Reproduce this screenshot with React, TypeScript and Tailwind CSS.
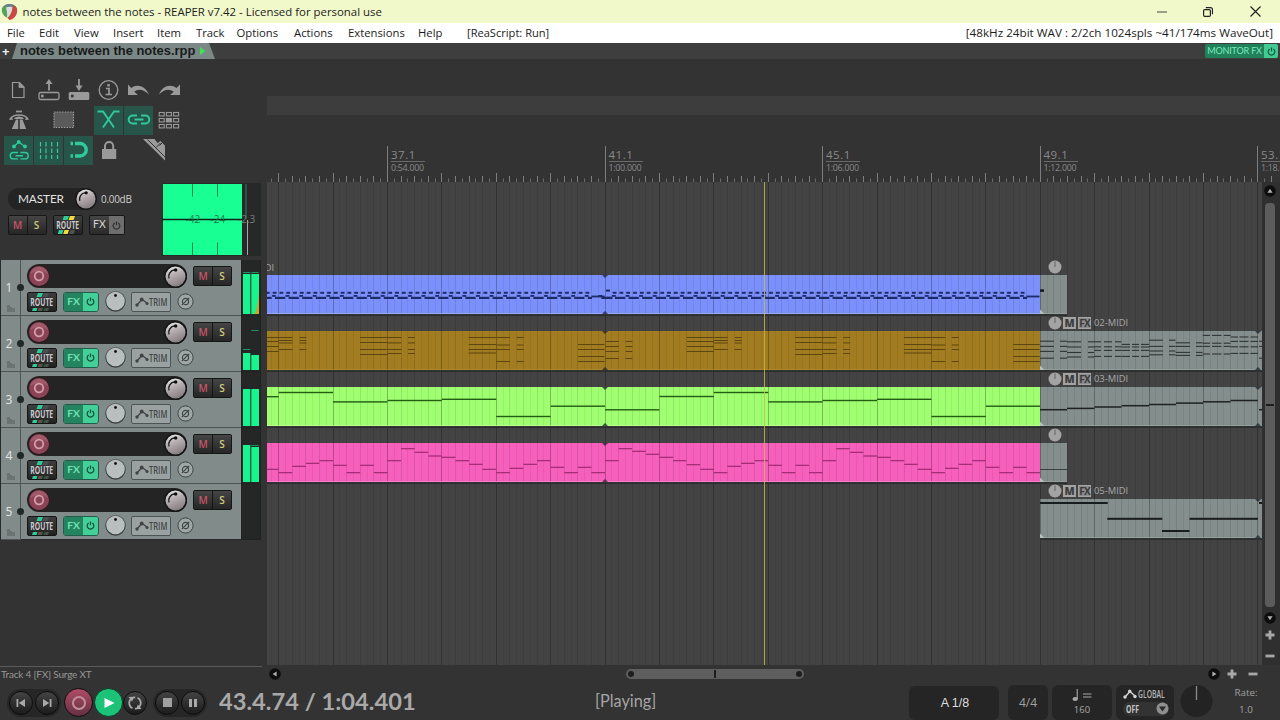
import React from "react";

type Note = [number, number, number];

const BAR = 54.4;
const ORIGIN = 605;
const LEFT = 267;

/* ---------- musical content ---------- */

const bassNotes = (): { x: number; y: number; w: number; h: number }[] => {
  const out: { x: number; y: number; w: number; h: number }[] = [];
  const section = (from: number, to: number) => {
    for (let k = -60; k < 80; k++) {
      const x = 612.7 + k * 6.8;
      if (x + 3.5 > from && x + 4 < to - 14) out.push({ x, y: 291.8, w: 3.8, h: 2 });
    }
    for (let k = -30; k < 40; k++) {
      const x = 612 + k * 13.6;
      if (x + 14 > from && x + 4 < to - 12) {
        out.push({ x, y: 295, w: 3.8, h: 1.8 });
        const start = x + 3;
        out.push({ x: start, y: 296.8, w: Math.min(10.2, to - 13 - start), h: 2.2 });
      }
    }
    out.push({ x: to - 13.5, y: 295.6, w: 13, h: 1.8 });
  };
  section(267, 605);
  section(611, 1040);
  out.push({ x: 606, y: 289.6, w: 4, h: 2 });
  out.push({ x: 606, y: 296.8, w: 6.5, h: 2.2 });
  return out;
};

const chordShapes: [number, number, number[]][] = [
  [251.6, 278.8, [337.5, 341.5, 346.5, 351.5]],
  [279, 292.5, [337.5, 340.5, 343, 349.5]],
  [299.6, 306.4, [337.5, 340.5, 343, 349.5]],
  [360, 387.4, [337.5, 342.5, 349.5, 354.5]],
  [387.6, 401.3, [337.5, 342.9, 349.5, 353.5]],
  [408, 415, [337.5, 342.9, 349.5, 353.5]],
  [468.7, 496.2, [337.5, 344.5, 349.5, 353]],
  [496.4, 510, [337.5, 345, 349.5, 361.5]],
  [516.7, 523.7, [337.5, 345, 349.5, 361.5]],
  [578, 604.5, [344.5, 349.5, 356.5, 361.5]],
];

const chordNotes: Note[] = [
  ...chordShapes.flatMap(([a, b, ys]) => ys.map((y): Note => [a, b, y])),
  ...chordShapes.flatMap(([a, b, ys]) => ys.map((y): Note => [a + 435.2, b + 435.2, y])),
  ...[341.5, 346.5, 351.5, 358.5].flatMap((y): Note[] => [
    [605.5, 619, y],
    [625.6, 632.4, y],
  ]),
];

const padLevels = [396.7, 392.5, 401.9, 400.5, 399.3, 416.5, 406.2, 409.8, 396.5, 392.5, 401.9, 400.5, 399.3, 416.5, 406.2];
const padNotes: Note[] = padLevels.map((y, i) => [ORIGIN + (i - 7) * BAR, ORIGIN + (i - 6) * BAR, y]);

const leadLevels = [
  469.3, 472.7, 466.3, 463.3, 460.7, 465.3, 472.7, 465.3, 472.7, 460.7, 448.7, 452.3, 456, 457.3, 460.7, 464.3, 469.3,
  472.7, 468.3, 464.3, 460.7, 467.3, 472.7, 467.3, 472.7, 460.7, 448.7, 451.3, 454.3, 457.3, 460.7, 464.7, 469.3, 472.7,
  466.3, 463.3, 460.7, 465.3, 472.7, 465.3, 472.7, 460.7, 448.7, 452.3, 456, 457.3, 460.7, 464.3, 469.3, 472.7, 468.3,
  464.3, 460.7, 467.3, 472.7, 467.3, 472.7,
];
const leadNotes: Note[] = leadLevels.map((y, i) => [ORIGIN + (i - 25) * 13.6, ORIGIN + (i - 24) * 13.6, y]);

const tailChordShapes: [number[][], number[]][] = [
  [[[1040, 1054], [1060, 1067]], [341.2, 346.4, 351.4, 358.2]],
  [[[1067, 1081], [1088, 1094]], [341.8, 347, 352.5, 357]],
  [[[1094, 1101], [1104, 1112], [1115, 1121.5]], [341.8, 346.8, 350.4, 356.4]],
  [[[1121.7, 1130], [1132, 1139], [1141, 1149]], [344.4, 347, 350.4, 356.4]],
  [[[1149, 1163], [1169, 1175.5]], [340.2, 346.4, 351, 354.8]],
  [[[1175.7, 1190], [1196, 1202.5]], [342.8, 346.4, 352.4, 355.4]],
  [[[1202.7, 1210], [1212, 1221.5], [1223.7, 1230.5]], [335.4, 343.2, 346.4, 354]],
  [[[1230.7, 1238], [1239.5, 1248.5], [1250.5, 1258]], [337, 341.4, 346.8, 353.4]],
  [[[1259, 1262]], [341.2, 346.4, 358.2]],
];
const tailChords: Note[] = tailChordShapes.flatMap(([spans, ys]) =>
  spans.flatMap(([a, b]) => ys.map((y): Note => [a, b, y])),
);

const tailPad: Note[] = [
  [1040, 1067, 409.7], [1067, 1094.5, 408.4], [1094.5, 1121.5, 407], [1121.5, 1149, 405.7],
  [1149, 1176, 404.5], [1176, 1203, 403.1], [1203, 1230.5, 401.8], [1230.5, 1258, 400.5], [1259, 1262, 409.7],
];

const tailFive: Note[] = [
  [1040, 1107.7, 503], [1107.3, 1162.3, 518.8], [1162, 1189.5, 531], [1189.5, 1258, 518.8], [1259, 1262, 503],
];

/* ---------- timeline primitives ---------- */

function GridLines({ x0, x1, y0, y1, faint, beat, bar }: { x0: number; x1: number; y0: number; y1: number; faint: number; beat: number; bar: number }) {
  const lines: React.ReactNode[] = [];
  for (let k = -50; k < 98; k++) {
    const x = ORIGIN + k * 6.8;
    if (x < x0 || x > x1) continue;
    const isBar = k % 8 === 0;
    const isBeat = k % 2 === 0;
    lines.push(
      <line key={k} x1={Math.floor(x) + 0.5} x2={Math.floor(x) + 0.5} y1={y0} y2={y1} stroke="#000" strokeOpacity={isBar ? bar : isBeat ? beat : faint} />,
    );
  }
  return <g>{lines}</g>;
}

function Clip({ x, w, y, fill, edge, ink, notes, thick = 1.2, seams = [], corner, children }: {
  x: number; w: number; y: number; fill: string; edge: string; ink: string; notes?: Note[]; thick?: number; seams?: number[]; corner?: boolean; children?: React.ReactNode;
}) {
  return (
    <svg width={w} height={41} viewBox={`${x} ${y} ${w} 41`} className="block shrink-0">
      <rect x={x} y={y} width={w} height={39} fill={fill} />
      <GridLines x0={x} x1={x + w} y0={y} y1={y + 39} faint={0.06} beat={0.1} bar={0.26} />
      <rect x={x} y={y + 38.3} width={w} height={0.9} fill={edge} />
      <rect x={x} y={y + 39.2} width={w} height={1.8} fill="#2c2e2e" />
      {notes?.map(([a, b, ny], i) => (
        <rect key={i} x={a} y={ny - thick / 2} width={b - a} height={thick} fill={ink} />
      ))}
      {children}
      {seams.map((s) => (
        <g key={s} fill="#1f2330" fillOpacity={0.75}>
          <path d={`M${s - 3} ${y} h6 l-3 3z`} />
          <path d={`M${s - 3} ${y + 39} h6 l-3 -3z`} />
        </g>
      ))}
      {corner && <path d={`M${x} ${y + 34.5} l4.5 4.5 h-4.5z`} fill="#b9bcbc" />}
    </svg>
  );
}

function ClipHeader({ label }: { label?: string }) {
  return (
    <div className="flex h-[15px] items-center pb-[1px] pl-[781px]">
      <svg width="14" height="14" viewBox="0 0 14 14" className="shrink-0">
        <circle cx="7" cy="7" r="6.5" fill="#a3a3a3" />
        <path d="M7 1.5V7" stroke="#6d6d6d" strokeWidth="1.2" />
      </svg>
      {label && (
        <>
          <span className="ml-[1px] flex h-3 w-[13px] items-center justify-center bg-[#a3a3a3] text-[10.5px] leading-none font-extrabold text-[#3d3d3d]">M</span>
          <span className="ml-[2px] flex h-3 w-[13px] items-center justify-center border border-[#a3a3a3] bg-[#8c8c8c] text-[10px] leading-none font-bold tracking-[-0.8px] text-[#3a3a3a]">FX</span>
          <span className="ml-[3px] text-[9.4px] leading-none whitespace-nowrap text-[#a8a8a8]">{label}</span>
        </>
      )}
    </div>
  );
}

function Ruler() {
  const ticks: React.ReactNode[] = [];
  for (let k = -49; k < 99; k++) {
    const x = ORIGIN + k * 6.8;
    if (x < LEFT || x > 1279) continue;
    const h = k % 32 === 0 ? 36 : k % 8 === 0 ? 9 : k % 2 === 0 ? 6 : 3.5;
    ticks.push(<line key={k} x1={Math.floor(x) + 0.5} x2={Math.floor(x) + 0.5} y1={182 - h} y2={182} stroke="#7d7d7d" strokeOpacity={k % 2 ? 0.75 : 1} />);
  }
  return (
    <svg width="1013" height="67" viewBox="267 115 1013 67" className="absolute inset-0">
      {ticks}
    </svg>
  );
}

const marks = [
  { bar: "37.1", time: "0:54.000" },
  { bar: "41.1", time: "1:00.000" },
  { bar: "45.1", time: "1:06.000" },
  { bar: "49.1", time: "1:12.000" },
  { bar: "53.1", time: "1:18.000" },
];

/* ---------- toolbar ---------- */

function Tool({ active, wide, children }: { active?: boolean; wide?: boolean; children: React.ReactNode }) {
  return (
    <div className={`flex h-[30px] items-center justify-center ${wide ? "w-[60px]" : "w-[30px]"} ${active ? "text-[#2fc99b]" : "text-[#9a9a9a]"}`}>
      <div className={`flex size-[29px] items-center justify-center ${active ? "bg-[#28554a]" : ""}`}>
        <svg width="30" height="30" viewBox="0 0 30 30" fill="none" stroke="currentColor" strokeWidth="1.4" className="shrink-0">
          {children}
        </svg>
      </div>
    </div>
  );
}

function Toolbar() {
  return (
    <div className="flex flex-col pt-[16px] pl-[3.5px]">
      <div className="flex">
        <Tool>
          <path d="M8.5 7.5h7l4.5 4.5v10.5h-11.5z" strokeWidth="1.2" />
          <path d="M15 7.5v5h5z" fill="currentColor" strokeWidth="0.8" />
        </Tool>
        <Tool>
          <rect x="5" y="17.5" width="20" height="7" rx="1.5" strokeWidth="1.3" />
          <rect x="7" y="19.7" width="2.6" height="2.6" fill="currentColor" stroke="none" />
          <path d="M15 15.5V7" strokeWidth="1.8" />
          <path d="M11.5 9L15 4l3.5 5z" fill="currentColor" stroke="none" />
        </Tool>
        <Tool>
          <rect x="4.7" y="17" width="20.6" height="8" rx="1.5" fill="currentColor" stroke="none" />
          <rect x="7" y="19.7" width="2.6" height="2.6" fill="#333" stroke="none" />
          <path d="M15 4v8" strokeWidth="1.8" />
          <path d="M11.5 10.5L15 16l3.5-5.5z" fill="currentColor" stroke="none" />
        </Tool>
        <Tool>
          <circle cx="14.5" cy="15" r="9.3" strokeWidth="1.3" />
          <path d="M12 13.5h3v6M11.5 19.5h6.5" strokeWidth="1.7" />
          <rect x="13.3" y="9" width="2.5" height="2.5" fill="currentColor" stroke="none" />
        </Tool>
        <Tool>
          <path d="M4 9.5V20h10l-3.8-3.2C14 13.5 19.5 14 25 19.5C21.5 11 13 8.5 7.300 13z" fill="currentColor" stroke="none" />
        </Tool>
        <Tool>
          <path d="M26 9.5V20H16l3.800-3.200C15.500 13.500 10 14 5 19.500C8 11 16.500 8.500 22.500 13z" fill="currentColor" stroke="none" />
        </Tool>
      </div>
      <div className="flex">
        <Tool>
          <path d="M12 14.500h2.200V24H7.800z M18.500 14.500h-2.700V24H22.200z" fill="currentColor" stroke="none" />
          <path d="M10 14c1-3.500 9-3.500 10 0z" fill="currentColor" stroke="none" />
          <path d="M6 14.500C9 8.500 21 8.500 24 14.500" strokeWidth="1.500" />
          <path d="M5 14.500l4 .5-1.500-3.500zM25 14.500l-4 .5 1.500-3.500z" fill="currentColor" stroke="none" />
          <path d="M12 6.500h6" strokeWidth="1.800" />
        </Tool>
        <Tool wide>
          <rect x="5" y="7" width="19.500" height="15.500" fill="#5b5b5b" strokeWidth="1.200" strokeDasharray="1.500 1.200" />
        </Tool>
        <Tool active>
          <path d="M3.500 6.500H9l11 16M25.500 6.500H20L9 22.500" strokeWidth="1.900" />
        </Tool>
        <Tool active>
          <path d="M13 18.500H8.700a4 4 0 0 1 0-8H13M17 10.500h4.300a4 4 0 0 1 0 8H17M10.500 14.500h9" strokeWidth="2" />
        </Tool>
        <Tool>
          {[0, 1, 2].map((r) =>
            [0, 1, 2].map((c) => (
              <rect key={`${r}${c}`} x={5.2 + c * 7.2} y={7.5 + r * 6} width="5" height="3.4" strokeWidth="1.1" fill={r === 1 && c === 1 ? "currentColor" : "none"} />
            )),
          )}
        </Tool>
      </div>
      <div className="flex">
        <Tool active>
          <path d="M10.500 11l4.500-4 3 2.500 3.500 2.500" strokeWidth="1.300" />
          <g fill="currentColor" stroke="none">
            <circle cx="10" cy="11.500" r="1.900" />
            <circle cx="14.700" cy="7" r="1.900" />
            <circle cx="21" cy="11.500" r="1.900" />
          </g>
          <path d="M14 17.500H9.500a3.200 3.200 0 0 0 0 6.400H14M16.500 17.500H21a3.200 3.200 0 0 1 0 6.400h-4.500M11.500 20.700h7.500" strokeWidth="1.400" />
        </Tool>
        <Tool active>
          <path d="M6.500 7v17M12 7v17M17.700 7v17M23.500 7v17" strokeWidth="1.200" strokeDasharray="4.500 2" />
        </Tool>
        <Tool active>
          <path d="M11 8.500h5a6.200 6.200 0 0 1 0 12.500h-5" strokeWidth="3.400" />
          <path d="M6.500 8.500h2.500M6.500 21h2.500" strokeWidth="3.400" />
        </Tool>
        <Tool>
          <rect x="8" y="14" width="14.200" height="10" fill="currentColor" stroke="none" />
          <path d="M11 14.500v-3.500a4.100 4.100 0 0 1 8.200 0v3.500" strokeWidth="2" />
        </Tool>
        <Tool wide>
          <path d="M4 4h11.500l3 4 3-2 4.500 4.500V25.500z" fill="currentColor" stroke="none" />
          <path d="M8.500 4.500L26 22M17 12.500l4.500-4.500M20.500 10.500l3-3" stroke="#333" strokeWidth="1" />
        </Tool>
      </div>
    </div>
  );
}

/* ---------- track controls ---------- */

function Power({ size = 9 }: { size?: number }) {
  return (
    <svg width={size} height={size} viewBox="0 0 10 10" fill="none" stroke="currentColor" strokeWidth="1.3">
      <path d="M3 2.2a3.7 3.7 0 1 0 4 0M5 .6v4" />
    </svg>
  );
}

function MuteSolo() {
  return (
    <div className="flex h-[20px] w-[39px] rounded-[2px] border border-[#161616] bg-[#161616] text-[10px] font-semibold">
      <div className="flex flex-1 items-center justify-center bg-linear-to-b from-[#454545] to-[#262626] text-[#c75567]">M</div>
      <div className="ml-px flex flex-1 items-center justify-center bg-linear-to-b from-[#454545] to-[#262626] text-[#cfcf7c]">S</div>
    </div>
  );
}

function Route({ master }: { master?: boolean }) {
  return (
    <div className="relative flex h-[20px] w-[30px] items-center justify-center rounded-[2px] border border-[#151515] bg-linear-to-b from-[#3d3f3f] to-[#222]">
      <svg width="28" height="18" viewBox="0 0 28 18" className="absolute inset-0">
        {master ? (
          <>
            <path d="M10 0h5l-1.5 4h-5z" fill="#2fc99b" />
            <path d="M16 0h5l-1.5 4h-5z" fill="#f3dc3c" />
            <path d="M5 14h4.5l-1.3 4H3.7z" fill="#2fc99b" />
            <path d="M10.5 14H15l-1.3 4H9.2z" fill="#f3dc3c" />
            <path d="M16.5 14H21l-1.3 4h-4.5z" fill="#4e5452" />
          </>
        ) : (
          <>
            <path d="M10 0h5l-1.5 4h-5z" fill="#2fc99b" />
            <path d="M16 0h5l-1.5 4h-5z" fill="#4a504e" />
            <path d="M5 15h4.5l-1 3H4z" fill="#2fc99b" />
            <path d="M10.5 15H15l-1 3H9.5z" fill="#5c5140" />
            <path d="M16.5 15H21l-1 3h-4.5z" fill="#3e5249" />
          </>
        )}
      </svg>
      <span className="relative scale-x-[0.68] font-['Open_Sans'] text-[10px] leading-none font-bold text-[#c9c9c9]">ROUTE</span>
    </div>
  );
}

function VolumeKnob({ size }: { size: number }) {
  return (
    <svg width={size} height={size} viewBox="0 0 24 24" className="shrink-0">
      <defs>
        <linearGradient id="knob" x1="0" y1="0" x2="0.4" y2="1">
          <stop offset="0" stopColor="#f4f4f4" />
          <stop offset="0.5" stopColor="#b5adaf" />
          <stop offset="1" stopColor="#8b8386" />
        </linearGradient>
      </defs>
      <circle cx="12" cy="12" r="12" fill="#161616" />
      <circle cx="12" cy="12" r="10.4" fill="url(#knob)" />
      <path d="M5.200 14C4 10 6.500 5.500 11.500 5" fill="none" stroke="#1b1b1b" strokeWidth="1.500" />
      <circle cx="12.200" cy="5.300" r="1.800" fill="#111" />
    </svg>
  );
}

function Track({ index, last }: { index: number; last?: boolean }) {
  return (
    <div className="flex h-[56px] w-[241px] border-l border-[#2a2a2a] bg-[#818b89]">
      <div className="flex h-[56px] w-5 flex-col items-center border-r border-b border-[#4f5655] pt-[18px]">
        <span className="pr-[3px] text-[12px] leading-[19px] text-[#e6e6e6]">{index}</span>
        <svg width="10" height="8" viewBox="0 0 10 8" className="mt-[7px]">
          <path d="M1 1h3v2h2v1h3v4H1z" fill="#6a7371" />
        </svg>
      </div>
      <div className={`relative flex flex-1 flex-col border-b pt-[4px] pl-[6px] ${last ? "border-[#2a2a2a]" : "border-[#4f5655]"}`}>
        <div className="absolute top-[24px] left-[-4px] size-[7px] rounded-full bg-[#222626]" />
        <div className="flex h-[24px] items-center">
          <div className="flex h-[24px] w-[160px] items-center justify-between rounded-l-full rounded-r-full bg-[#242424]">
            <svg width="22" height="22" viewBox="0 0 22 22" className="ml-px">
              <circle cx="11" cy="11" r="10.8" fill="#2c1a1f" />
              <circle cx="11" cy="11" r="10" fill="#8a4455" />
              <path d="M2 9a9.200 9.200 0 0 1 18 0a12 8 0 0 0-18 0" fill="#a05a6a" />
              <circle cx="11" cy="11" r="4.300" fill="none" stroke="#d5a0ab" strokeWidth="1.700" />
            </svg>
            <VolumeKnob size={23} />
          </div>
          <div className="ml-[6px]">
            <MuteSolo />
          </div>
        </div>
        <div className="mt-[3.400px] flex h-[21px] items-center">
          <Route />
          <div className="ml-[6px] flex h-[20px] w-[36px] overflow-hidden rounded-[3px] border border-[#1f5e48] text-[#0f4a35]">
            <div className="flex w-[19px] items-center justify-center bg-[#258460] font-['Lato'] text-[10.300px] font-bold text-[#6fe3b4]">FX</div>
            <div className="flex flex-1 items-center justify-center bg-[#43cf97]">
              <Power />
            </div>
          </div>
          <svg width="21" height="21" viewBox="0 0 21 21" className="ml-[6px]">
            <circle cx="10.500" cy="10.500" r="10.200" fill="#3b4040" />
            <circle cx="10.500" cy="10" r="9.300" fill="#b9bfbe" />
            <circle cx="10.500" cy="4.500" r="1.400" fill="#111" />
          </svg>
          <div className="ml-[5px] flex h-[20px] w-[40px] items-center rounded-[2px] border border-[#4d5453] bg-[#9aa2a1] pl-[3px] text-[#414746]">
            <svg width="14" height="10" viewBox="0 0 14 10" className="shrink-0">
              <path d="M2 8l5-5.500L12 6" fill="none" stroke="currentColor" strokeWidth="1.400" />
              <circle cx="2" cy="8" r="1.700" fill="currentColor" />
              <circle cx="6.700" cy="2.500" r="1.900" fill="currentColor" />
              <circle cx="12" cy="6.500" r="1.600" fill="currentColor" />
            </svg>
            <span className="origin-left scale-x-[0.72] text-[10.500px] leading-none font-semibold">TRIM</span>
          </div>
          <svg width="17" height="17" viewBox="0 0 17 17" className="ml-[5.500px]" fill="none" stroke="#3e4443">
            <circle cx="8.500" cy="8.500" r="7.600" fill="#a0a8a7" />
            <circle cx="8.500" cy="8.500" r="3.100" strokeWidth="1.100" />
            <path d="M4.800 12.200l7.400-7.400" strokeWidth="1.100" />
          </svg>
        </div>
      </div>
    </div>
  );
}

type MeterSpec = { l: number; r: number; peakL?: number; peakR?: number; warm?: boolean };
const meters: MeterSpec[] = [
  { l: 40, r: 40, peakL: 43, peakR: 43, warm: true },
  { l: 17, r: 15, peakL: 22, peakR: 41 },
  { l: 37, r: 37 },
  { l: 37, r: 35, peakR: 38 },
  { l: 0, r: 0 },
];

function Meter({ l, r, peakL, peakR, warm }: MeterSpec) {
  return (
    <svg width="20" height="56" viewBox="0 0 20 56" className="block bg-[#1f2020]">
      <rect x="0.500" width="19" height="55.500" fill="#252626" />
      <rect x="2" y={54 - l} width="7.300" height={l} fill="#17f58f" />
      <rect x="10.300" y={54 - r} width="7.700" height={r} fill="#17f58f" />
      {warm && <path d="M18 32v22h-4.500c1.500-3 3-8 4.500-22z" fill="#c9a52c" />}
      {peakL && <rect x="2" y={55 - peakL} width="7.300" height="0.900" fill="#22a06a" />}
      {peakR && <rect x="10.300" y={55 - peakR} width="7.300" height="0.900" fill="#22a06a" />}
    </svg>
  );
}

function Master() {
  return (
    <div className="flex h-[77px] pl-[7.500px]">
      <div className="flex w-[154.500px] flex-col pt-[4px]">
        <div className="flex h-[24px] items-center">
          <div className="flex h-[22px] w-[79px] items-center rounded-l-full bg-[#242424] pl-[10.500px]">
            <span className="font-['Lato'] text-[11.800px] tracking-[-0.100px] text-[#e2e2e2]">MASTER</span>
          </div>
          <div className="-ml-[12px]">
            <VolumeKnob size={22} />
          </div>
          <span className="ml-[4.500px] text-[10px] tracking-[-0.300px] whitespace-nowrap text-[#cfcfcf]">0.00dB</span>
        </div>
        <div className="mt-[4px] flex items-center">
          <MuteSolo />
          <div className="ml-[6.500px]">
            <Route master />
          </div>
          <div className="ml-[6px] flex h-[20px] w-[36px] overflow-hidden rounded-[2px] border border-[#151515]">
            <div className="flex w-[19px] items-center justify-center bg-linear-to-b from-[#454545] to-[#2a2a2a] font-['Lato'] text-[10.500px] text-[#d5d5d5]">FX</div>
            <div className="flex flex-1 items-center justify-center bg-[#6e6e6e] text-[#2d2d2d]">
              <Power />
            </div>
          </div>
        </div>
      </div>
      <svg width="100" height="77" viewBox="162 183 100 77" className="block">
        <rect x="162" y="183" width="99" height="73" fill="#272828" />
        <rect x="163" y="184" width="79" height="71" fill="#18ff94" />
        <path d="M192.500 184v12.500M217.500 184v12.500M192.500 242.500V255M217.500 242.500V255" stroke="#0b8a50" />
        <path d="M162 219.500h84" stroke="#10241b" strokeWidth="1.600" />
        <path d="M246 184v35" stroke="#3f7d62" />
        <path d="M247.500 220v35" stroke="#a5a5a5" />
        <g fontFamily="Open Sans" fontSize="10" fill="#14794c">
          <text x="185.500" y="223">-42</text>
          <text x="210.500" y="223">-24</text>
          <text x="238" y="223" fill="#6f8078">-2.3</text>
        </g>
      </svg>
    </div>
  );
}

/* ---------- scroll bars ---------- */

function Arrow({ dir }: { dir: "up" | "down" | "left" | "right" }) {
  const d = { up: "M6 3.8l2.6 4H3.4z", down: "M6 8.2l2.6-4H3.4z", left: "M3.6 6l4-2.5v5z", right: "M8.4 6l-4-2.5v5z" }[dir];
  return (
    <svg width="12" height="12" viewBox="0 0 12 12" className="shrink-0">
      <circle cx="6" cy="6" r="5.8" fill="#0d0d0d" />
      <path d={d} fill="#b0b0b0" />
    </svg>
  );
}

function Sign({ plus }: { plus?: boolean }) {
  return (
    <svg width="10" height="10" viewBox="0 0 10 10" className="block shrink-0">
      <path d={plus ? "M.5 5h9M5 .5v9" : "M.5 5h9"} stroke="#a8a8a8" strokeWidth="2.8" />
    </svg>
  );
}

/* ---------- transport ---------- */

function RoundButton({ children }: { children: React.ReactNode }) {
  return (
    <div className="flex size-[24px] items-center justify-center rounded-full border border-[#0c0c0c] bg-linear-to-b from-[#444] to-[#1c1c1c] text-[#a9a9a9]">
      {children}
    </div>
  );
}

function Transport() {
  return (
    <div className="flex h-[38px] items-center pb-[1px] pl-[7px] font-['Lato']">
      <div className="mt-[4px] flex h-[28px] w-[54px] items-center justify-between rounded-full bg-[#262626] px-[2px]">
        <RoundButton>
          <svg width="10" height="10" viewBox="0 0 10 10" fill="currentColor"><path d="M.5 1h1.800v8H.5zM9 1v8L2.800 5z" /></svg>
        </RoundButton>
        <RoundButton>
          <svg width="10" height="10" viewBox="0 0 10 10" fill="currentColor"><path d="M7.700 1h1.800v8H7.700zM1 1v8l6.200-4z" /></svg>
        </RoundButton>
      </div>
      <div className="mt-[4px] ml-[3px] flex size-[29px] items-center justify-center rounded-full border border-[#150c0e] bg-linear-to-b from-[#b04c67] to-[#643040]">
        <div className="size-[14px] rounded-full border-[2px] border-[#c0909b]" />
      </div>
      <div className="mt-[4px] ml-[1px] flex size-[29px] items-center justify-center rounded-full border border-[#0e3b27] bg-[#1cc277]">
        <svg width="12" height="12" viewBox="0 0 12 12"><path d="M1.500 1l10 5-10 5z" fill="#fff" /></svg>
      </div>
      <div className="mt-[4px] flex">
        <RoundButton>
          <svg width="16" height="16" viewBox="0 0 16 16" fill="none" stroke="currentColor" strokeWidth="1.700">
            <path d="M5.500 13.200A5.700 5.700 0 0 1 4.600 3.400M10.500 2.800a5.700 5.700 0 0 1 .9 9.800" />
            <path d="M5.200 3a5.700 5.700 0 0 1 3-.7M10.800 13a5.700 5.700 0 0 1-3 .7" />
            <path d="M1.500 2l5.200-.2-1.500 4.700zM14.500 14l-5.200.2 1.500-4.700z" fill="currentColor" stroke="none" />
          </svg>
        </RoundButton>
      </div>
      <div className="mt-[4px] ml-[6px] flex h-[28px] w-[54px] items-center justify-between rounded-full bg-[#262626] px-[2px]">
        <RoundButton><div className="size-[9px] bg-[#a0a0a0]" /></RoundButton>
        <RoundButton>
          <div className="flex gap-[2px]">
            <div className="h-[8px] w-[3px] bg-[#a9a9a9]" />
            <div className="h-[8px] w-[3px] bg-[#a9a9a9]" />
          </div>
        </RoundButton>
      </div>
      <div className="ml-[12px] w-[376px] pt-[3px] text-[23.700px] leading-none font-bold whitespace-nowrap text-[#a9a9a9]">43.4.74 / 1:04.401</div>
      <div className="w-[314px] pt-[2px] text-[16.300px] leading-none text-[#a5a5a5]">[Playing]</div>
      <div className="mt-[4px] flex h-[34px] w-[90px] items-center justify-center rounded-[6px] bg-[#252525] pt-px pl-[2px] font-['Liberation_Sans'] text-[12.500px] text-[#dedede]">A 1/8</div>
      <div className="mt-[3px] ml-[9px] flex h-[35px] w-[40px] items-center justify-center rounded-[6px] bg-[#252525] pt-[2px] font-['Open_Sans'] text-[12px] text-[#a3a3a3]">4/4</div>
      <div className="mt-[3px] ml-[4px] flex h-[35px] w-[60px] flex-col items-center rounded-[6px] bg-[#252525] pt-[4px] text-[#a8a8a8]">
        <svg width="20" height="12" viewBox="0 0 20 12">
          <path d="M5.200 0v10" stroke="currentColor" strokeWidth="1.100" />
          <ellipse cx="3.200" cy="10" rx="2.700" ry="1.900" fill="currentColor" />
          <path d="M11 5h8.500M11 8h8.500" stroke="currentColor" strokeWidth="1.100" />
        </svg>
        <span className="mt-[4px] font-['Open_Sans'] text-[9.500px] leading-none">160</span>
      </div>
      <div className="mt-[3px] ml-[4px] flex h-[35px] w-[58px] flex-col rounded-[6px] bg-[#252525] pt-[4px] pr-[5px] pl-[7px]">
        <div className="flex h-[11px] items-center">
          <svg width="14" height="10" viewBox="0 0 14 10" className="shrink-0">
            <path d="M2 8l5-5.500L12 7" fill="none" stroke="#d5d5d5" strokeWidth="1.400" />
            <circle cx="2" cy="8" r="1.700" fill="#d5d5d5" />
            <circle cx="6.700" cy="2.300" r="1.700" fill="#d5d5d5" />
            <circle cx="12" cy="7.500" r="1.700" fill="#d5d5d5" />
          </svg>
          <span className="ml-px origin-left scale-x-[0.68] font-['Open_Sans'] text-[10px] leading-none font-semibold text-[#b5b5b5]">GLOBAL</span>
        </div>
        <div className="mt-[2px] flex h-[14px] items-center justify-between rounded-full bg-[#333] pl-[3px]">
          <span className="origin-left scale-x-[0.68] font-['Open_Sans'] text-[10px] leading-none font-bold text-[#c5c5c5]">OFF</span>
          <svg width="13" height="13" viewBox="0 0 13 13"><circle cx="6.500" cy="6.500" r="6" fill="#8f8f8f" /><path d="M3 4.500h7l-3.500 5z" fill="#2a2a2a" /></svg>
        </div>
      </div>
      <svg width="33" height="33" viewBox="0 0 33 33" className="ml-[6px]">
        <circle cx="16.500" cy="17" r="16" fill="#232323" />
        <path d="M16.500 2v14" stroke="#8c8c8c" strokeWidth="1.300" />
      </svg>
      <div className="ml-[15px] flex w-[36px] flex-col items-center pt-[2px] font-['Open_Sans'] text-[9.800px] leading-[16.500px] text-[#a0a0a0]">
        <span>Rate:</span>
        <span>1.0</span>
      </div>
    </div>
  );
}

/* ---------- page ---------- */

export default function App() {
  return (
    <div className="flex h-[720px] w-[1280px] flex-col overflow-hidden bg-[#333333] font-['Open_Sans','Noto_Sans',sans-serif]">
      <header className="flex h-[23px] shrink-0 items-center bg-[#f1f9cb] text-[#1d1d1d]">
        <svg width="17" height="18" viewBox="0 0 17 18" className="ml-px">
          <path d="M1 6C1.500 3 4.500 1 8.500 1S15.500 3 16 6l-7.500 3z" fill="#66808a" />
          <path d="M1 5.500C.2 9 2 12.500 5.500 14.500L8.500 8 5 3C3 3.500 1.500 4.300 1 5.500z" fill="#4fa65a" />
          <path d="M12 2.200c3.500 1 5 4.300 3.800 8C14.800 13.500 12 16.500 8.500 17L6 14.500C9 12 11 8 12 2.200z" fill="#c64b43" />
          <path d="M5 4.500c2-.8 4.500-.8 6.500-.2-.5 4.700-2.500 8.700-5 10.700C6.300 11.500 6 8 5 4.500z" fill="#e3dcdc" />
        </svg>
        <span className="ml-[4.500px] flex-1 pb-px text-[11.420px] leading-[17px] whitespace-nowrap">notes between the notes - REAPER v7.42 - Licensed for personal use</span>
        <div className="flex w-[126px] items-center">
          <svg width="10" height="10" viewBox="0 0 10 10" className="ml-[3px]"><path d="M0 5h10" stroke="#444" /></svg>
          <svg width="10" height="10" viewBox="0 0 10 10" fill="none" stroke="#222" strokeWidth="1.2" className="ml-[36px]">
            <rect x=".6" y="2.6" width="6.8" height="6.8" rx="1.2" />
            <path d="M2.800 .6h4.700a2 2 0 0 1 2 2v4.600" />
          </svg>
          <svg width="11" height="11" viewBox="0 0 11 11" className="ml-[37px]"><path d="M.5.5l10 10M10.500.5l-10 10" stroke="#222" strokeWidth="1.2" /></svg>
        </div>
      </header>

      <nav className="flex h-[20px] shrink-0 items-center bg-white pl-[7px] text-[11.300px] whitespace-nowrap text-[#1c1c1c]">
        <span className="w-[32px]">File</span>
        <span className="w-[35px]">Edit</span>
        <span className="w-[39px]">View</span>
        <span className="w-[44px]">Insert</span>
        <span className="w-[39px]">Item</span>
        <span className="w-[40.500px]">Track</span>
        <span className="w-[57.500px]">Options</span>
        <span className="w-[54px]">Actions</span>
        <span className="w-[70px]">Extensions</span>
        <span className="w-[49px]">Help</span>
        <span className="flex-1 text-[11.100px]">[ReaScript: Run]</span>
        <span className="pr-[7px] text-[11.680px]">[48kHz 24bit WAV : 2/2ch 1024spls ~41/174ms WaveOut]</span>
      </nav>

      <div className="flex h-[16px] shrink-0 items-center bg-[#3e3e3e]">
        <span className="w-[12px] pl-[2px] text-[13px] leading-none font-bold text-[#eee]">+</span>
        <div className="flex h-full w-[203px] items-center bg-[#7c8886] pl-[8px] font-['Liberation_Sans'] text-[12.950px] font-bold whitespace-nowrap text-[#171b1b] [clip-path:polygon(5px_0,197px_0,100%_100%,0_100%)]">
          notes between the notes.rpp
          <svg width="6" height="8" viewBox="0 0 6 8" className="ml-[5px]"><path d="M0 0l5.500 4L0 8z" fill="#36e84e" /></svg>
        </div>
        <div className="ml-auto flex h-[14px] w-[73px] overflow-hidden rounded-[2px] bg-[#21815b] font-['Lato'] text-[9.100px] text-[#7ce9bd]">
          <span className="flex w-[59px] shrink-0 items-center justify-center tracking-[-0.200px] whitespace-nowrap">MONITOR FX</span>
          <span className="flex flex-1 items-center justify-center bg-[#41cb93] text-[#12583d]"><Power size={9} /></span>
        </div>
        <div className="w-[2px]" />
      </div>

      <div className="flex h-[623px] shrink-0">
        <aside className="flex w-[262px] flex-col">
          <Toolbar />
          <div className="h-[18px] shrink-0" />
          <Master />
          <div className="flex">
            <div className="flex flex-col">
              {[1, 2, 3, 4, 5].map((n) => (
                <Track key={n} index={n} last={n === 5} />
              ))}
            </div>
            <div className="flex flex-col">
              {meters.map((m, i) => (
                <Meter key={i} {...m} />
              ))}
            </div>
          </div>
          <div className="flex-1" />
          <div className="h-[16px] border-t border-[#5a5a5a] pt-[2px] pl-[1px] font-['Lato'] text-[10px] leading-none tracking-[-0.200px] text-[#969696]">Track 4 [FX] Surge XT</div>
        </aside>
        <div className="w-[5px]" />

        <main className="flex w-[1013px] flex-col">
          <div className="h-[37px]" />
          <div className="h-[19px] bg-[#3d3d3d]" />
          <div className="relative h-[67px] overflow-hidden">
            <Ruler />
            <div className="flex pt-[33.500px] pl-[124px] text-[#8a8a8a]">
              {marks.map((m) => (
                <div key={m.bar} className="w-[217.500px] shrink-0">
                  <div className="flex w-[34px] flex-col whitespace-nowrap">
                    <span className="border-b border-[#6a6a6a] text-[11.500px] leading-[12px] tracking-[0.500px]">{m.bar}</span>
                    <span className="pt-[1px] text-[8.900px] leading-[10px] tracking-[-0.300px]">{m.time}</span>
                  </div>
                </div>
              ))}
            </div>
          </div>

          <div className="flex h-[483px]">
            <div className="relative h-[483px] w-[995px] overflow-hidden bg-[#434343]">
              <svg width="995" height="483" viewBox="267 182 995 483" className="absolute inset-0">
                <GridLines x0={267} x1={1262} y0={182} y1={665} faint={0.06} beat={0.1} bar={0.26} />
              </svg>
              <div className="relative flex flex-col pt-[78px]">
                <div className="relative h-[56px]">
                  <span className="absolute top-[3px] left-[-2px] text-[9px] leading-none text-[#a8a8a8]">DI</span>
                  <ClipHeader />
                  <div className="flex">
                    <Clip x={267} w={773} y={275} fill="#7b90fb" edge="#a3b1ff" ink="#1e2d6b" seams={[605]}>
                      {bassNotes().map((n, i) => (
                        <rect key={i} x={n.x} y={n.y} width={n.w} height={n.h} fill="#1d2b69" />
                      ))}
                    </Clip>
                    <Clip x={1040} w={27} y={275} fill="#848e8c" edge="#9aa2a1" ink="#121516" thick={2.4} notes={[[1040, 1044, 290.6]]} corner />
                  </div>
                </div>
                <div className="h-[56px]">
                  <ClipHeader label="02-MIDI" />
                  <div className="flex">
                    <Clip x={267} w={773} y={331} fill="#a17c20" edge="#b28e35" ink="#5c450f" thick={1} notes={chordNotes} seams={[605]} />
                    <Clip x={1040} w={222} y={331} fill="#848e8c" edge="#9aa2a1" ink="#2f3535" thick={1.1} notes={tailChords} seams={[1258]} corner />
                  </div>
                </div>
                <div className="h-[56px]">
                  <ClipHeader label="03-MIDI" />
                  <div className="flex">
                    <Clip x={267} w={773} y={387} fill="#a0ff70" edge="#c0ff9c" ink="#235c14" thick={1.4} notes={padNotes} seams={[605]} />
                    <Clip x={1040} w={222} y={387} fill="#848e8c" edge="#9aa2a1" ink="#1d2121" thick={1.5} notes={tailPad} seams={[1258]} corner />
                  </div>
                </div>
                <div className="h-[56px]">
                  <ClipHeader />
                  <div className="flex">
                    <Clip x={267} w={773} y={443} fill="#f75fbc" edge="#ff8bd0" ink="#98266b" thick={1.1} notes={leadNotes} seams={[605]} />
                    <Clip x={1040} w={27} y={443} fill="#848e8c" edge="#9aa2a1" ink="#3a4040" thick={1} notes={[[1040, 1067, 469.5]]} corner />
                  </div>
                </div>
                <div className="h-[56px]">
                  <ClipHeader label="05-MIDI" />
                  <div className="flex pl-[773px]">
                    <Clip x={1040} w={222} y={499} fill="#848e8c" edge="#9aa2a1" ink="#181c1c" thick={2} notes={tailFive} seams={[1258]} corner />
                  </div>
                </div>
              </div>
              <div className="absolute top-0 left-[497px] h-full w-[1px] bg-[#c9b94a]/80" />
            </div>
            <div className="flex w-[18px] flex-col items-center bg-[#2f2f2f] pt-[3px] pr-[2px]">
              <Arrow dir="up" />
              <div className="mt-[6px] flex h-[404px] w-[10px] items-center justify-center rounded-[4px] bg-[#5c5c5c]">
                <div className="h-[2px] w-[8px] bg-[#1c1c1c]" />
              </div>
              <div className="mt-[5px]"><Arrow dir="down" /></div>
              <div className="mt-[6px]"><Sign plus /></div>
              <div className="mt-[11px]"><Sign /></div>
            </div>
          </div>

          <div className="flex h-[17px] items-center">
            <div className="ml-[2px]"><Arrow dir="left" /></div>
            <div className="ml-[345px] flex h-[10px] w-[178px] items-center justify-between rounded-full bg-[#5e5e5e] px-[2px]">
              <div className="size-[6px] rounded-full bg-[#1d1d1d]" />
              <div className="h-[8px] w-[2px] bg-[#1d1d1d]" />
              <div className="size-[6px] rounded-full bg-[#1d1d1d]" />
            </div>
            <div className="ml-[404px]"><Arrow dir="right" /></div>
            <div className="ml-[7px]"><Sign plus /></div>
            <div className="ml-[11px]"><Sign /></div>
          </div>
        </main>
      </div>

      <Transport />
    </div>
  );
}
